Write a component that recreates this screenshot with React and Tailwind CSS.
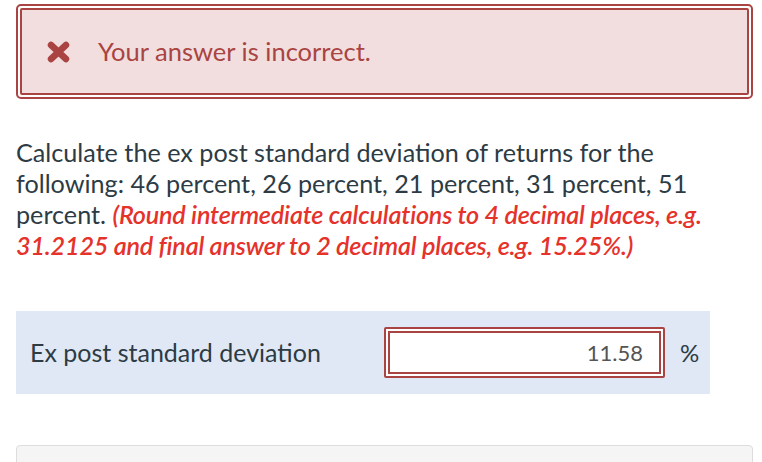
import React from 'react';

const XIcon = () => (
  <svg width="23" height="22" viewBox="0 0 23 22" className="shrink-0">
    <path d="M4 4 L19 18 M19 4 L4 18" stroke="#a94442" strokeWidth="6.5" strokeLinecap="round" />
  </svg>
);

export default function App() {
  return (
    <div className="w-[762px] h-[462px] overflow-hidden bg-white pt-[4px] pl-[16px] pr-[9px] font-['Lato',sans-serif]">
      <div className="rounded-[5px] border-2 border-[#a94442] bg-white p-[2px]">
        <div className="h-[83px] box-content rounded-[2px] border-2 border-[#a94442] bg-[#f2dede] flex items-center pl-[25px] gap-[28px]">
          <XIcon />
          <span className="text-[25.5px] text-[#a94442] leading-none">Your answer is incorrect.</span>
        </div>
      </div>

      <p className="mt-[38px] text-[25.2px] leading-[31px] text-[#2d3b45]">
        Calculate the ex post standard deviation of returns for the following: 46 percent, 26 percent, 21 percent, 31 percent, 51 percent.{' '}
        <span className="font-semibold italic text-[#e5322b] tracking-[-0.2px]">
          (Round intermediate calculations to 4 decimal places, e.g. 31.2125 and final answer to 2 decimal places, e.g. 15.25%.)
        </span>
      </p>

      <div className="mt-[50px] w-[694px] h-[83px] bg-[#dfe8f4] flex items-center pl-[14px]">
        <span className="w-[354px] text-[25px] text-[#2d3b45]">Ex post standard deviation</span>
        <div className="w-[281px] h-[51px] rounded-[2px] border-2 border-[#a94442] bg-white p-[2px]">
          <div className="h-full border-2 border-[#a94442] flex items-center justify-end pr-[16px] text-[22px] text-[#555555]">
            11.58
          </div>
        </div>
        <span className="ml-[15px] text-[24px] text-[#2d3b45]">%</span>
      </div>

      <div className="mt-[51px] h-[40px] rounded-t-[4px] border border-[#dddddd] bg-[#f5f5f5]"></div>
    </div>
  );
}
